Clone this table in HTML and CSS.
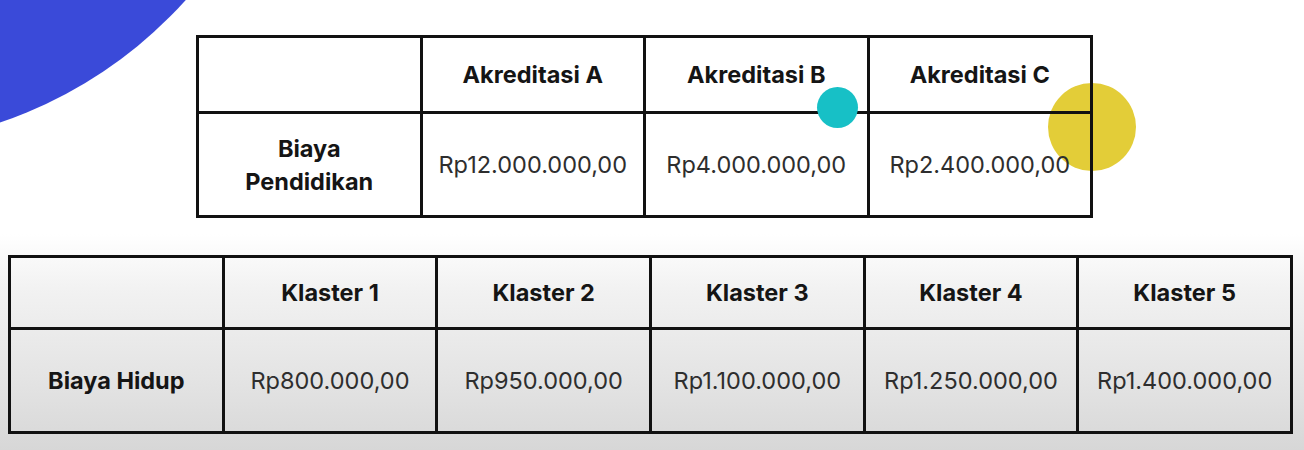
FILE: index.html
```html
<!DOCTYPE html>
<html lang="id">
<head>
<meta charset="utf-8">
<title>Biaya</title>
<link rel="stylesheet" href="styles.css">
</head>
<body>
<div class="blob blob-blue"></div>
<div class="blob blob-yellow"></div>
<main class="page">
  <table class="grid grid-top">
    <tr class="head">
      <td></td>
      <th>Akreditasi A</th>
      <th>Akreditasi B</th>
      <th>Akreditasi C</th>
    </tr>
    <tr class="body">
      <th>Biaya<br>Pendidikan</th>
      <td>Rp12.000.000,00</td>
      <td>Rp4.000.000,00</td>
      <td>Rp2.400.000,00</td>
    </tr>
  </table>
  <table class="grid grid-bottom">
    <tr class="head">
      <td></td>
      <th>Klaster 1</th>
      <th>Klaster 2</th>
      <th>Klaster 3</th>
      <th>Klaster 4</th>
      <th>Klaster 5</th>
    </tr>
    <tr class="body">
      <th>Biaya Hidup</th>
      <td>Rp800.000,00</td>
      <td>Rp950.000,00</td>
      <td>Rp1.100.000,00</td>
      <td>Rp1.250.000,00</td>
      <td>Rp1.400.000,00</td>
    </tr>
  </table>
</main>
<div class="blob blob-teal"></div>
</body>
</html>
```
FILE: styles.css
```css
html, body {
  margin: 0;
  padding: 0;
}
body {
  width: 1304px;
  height: 450px;
  overflow: hidden;
  position: relative;
  font-family: Inter, "Noto Sans", "Liberation Sans", sans-serif;
  background: linear-gradient(to bottom, #ffffff 0%, #ffffff 52%, #f2f2f2 64%, #e4e4e4 84%, #d7d7d7 100%);
  color: #111;
}
.page {
  position: relative;
  z-index: 1;
  display: flex;
  flex-direction: column;
  padding-top: 35px;
}
.grid {
  border-collapse: collapse;
  table-layout: fixed;
}
.grid th, .grid td {
  border: 3px solid #111;
  text-align: center;
  vertical-align: middle;
  padding: 0;
}
.grid th {
  font-weight: 700;
  font-size: 23.5px;
  color: #151515;
  line-height: 33px;
}
.grid td {
  font-weight: 400;
  font-size: 23.5px;
  color: #2e2e2e;
}
.grid-top {
  margin-left: 196px;
  width: 897px;
}
.grid-top .head { height: 76px; }
.grid-top .body { height: 104px; }
.grid-bottom {
  margin-top: 37px;
  margin-left: 8px;
  width: 1285px;
}
.grid-bottom .head { height: 72px; }
.grid-bottom .body { height: 104px; }
.blob {
  position: absolute;
  border-radius: 50%;
}
.blob-blue {
  left: -583px;
  top: -736px;
  width: 882px;
  height: 882px;
  background: #3a4ad9;
  z-index: 0;
}
.blob-yellow {
  left: 1048px;
  top: 83px;
  width: 88px;
  height: 88px;
  background: #e3cd38;
  z-index: 0;
}
.blob-teal {
  left: 817px;
  top: 87px;
  width: 41px;
  height: 41px;
  background: #17c0c6;
  z-index: 2;
}
```
